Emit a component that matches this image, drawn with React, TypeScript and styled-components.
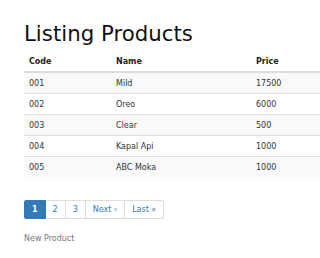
import React from "react";
import styled, { createGlobalStyle } from "styled-components";

const GlobalStyle = createGlobalStyle`
  html, body {
    margin: 0;
    padding: 0;
    background: #ffffff;
    overflow: hidden;
  }
  body {
    font-family: "DejaVu Sans", Verdana, sans-serif;
    font-size: 8px;
    color: #333333;
  }
`;

const Page = styled.div`
  padding: 0 0 0 24px;
`;

const Title = styled.h1`
  margin: 22px 0 6px;
  font-size: 21.3px;
  font-weight: 400;
  line-height: 23px;
  color: #111111;
`;

const Table = styled.table`
  width: 100%;
  table-layout: fixed;
  border-collapse: collapse;
  border-spacing: 0;
`;

const HeadCell = styled.th<{ $w?: number }>`
  box-sizing: border-box;
  width: ${(p) => (p.$w ? `${p.$w}px` : "auto")};
  text-align: left;
  font-weight: 700;
  padding: 5px 5px 4px;
  line-height: 11px;
  border-bottom: 2px solid #dddddd;
  color: #222222;
`;

const Row = styled.tr<{ $striped: boolean }>`
  background: ${(p) => (p.$striped ? "#f9f9f9" : "#ffffff")};
`;

const Cell = styled.td`
  padding: 5px 5px 4px;
  line-height: 11px;
  border-top: 1px solid #dddddd;
`;

const Pager = styled.ul`
  display: flex;
  list-style: none;
  margin: 23px 0 0;
  padding: 0;
`;

const PageLink = styled.li<{ $active?: boolean }>`
  padding: 3px 7px;
  line-height: 11px;
  margin-left: -1px;
  border: 1px solid ${(p) => (p.$active ? "#337ab7" : "#dddddd")};
  background: ${(p) => (p.$active ? "#337ab7" : "#ffffff")};
  color: ${(p) => (p.$active ? "#ffffff" : "#337ab7")};
  font-weight: ${(p) => (p.$active ? 700 : 400)};
  position: relative;
  z-index: ${(p) => (p.$active ? 1 : 0)};

  &:first-child {
    margin-left: 0;
    border-radius: 2px 0 0 2px;
  }
  &:last-child {
    border-radius: 0 2px 2px 0;
  }
`;

const NewLink = styled.a`
  display: block;
  margin-top: 14px;
  line-height: 11px;
  color: #777777;
  text-decoration: none;
`;

const products = [
  { code: "001", name: "Mild", price: "17500" },
  { code: "002", name: "Oreo", price: "6000" },
  { code: "003", name: "Clear", price: "500" },
  { code: "004", name: "Kapal Api", price: "1000" },
  { code: "005", name: "ABC Moka", price: "1000" },
];

const pages = ["1", "2", "3", "Next ›", "Last »"];

const App: React.FC = () => {
  return (
    <Page>
      <GlobalStyle />
      <Title>Listing Products</Title>
      <Table>
        <thead>
          <tr>
            <HeadCell $w={87}>Code</HeadCell>
            <HeadCell $w={140}>Name</HeadCell>
            <HeadCell>Price</HeadCell>
          </tr>
        </thead>
        <tbody>
          {products.map((p, i) => (
            <Row key={p.code} $striped={i % 2 === 0}>
              <Cell>{p.code}</Cell>
              <Cell>{p.name}</Cell>
              <Cell>{p.price}</Cell>
            </Row>
          ))}
        </tbody>
      </Table>
      <Pager>
        {pages.map((label, i) => (
          <PageLink key={label} $active={i === 0}>
            {label}
          </PageLink>
        ))}
      </Pager>
      <NewLink href="#">New Product</NewLink>
    </Page>
  );
};

export default App;
